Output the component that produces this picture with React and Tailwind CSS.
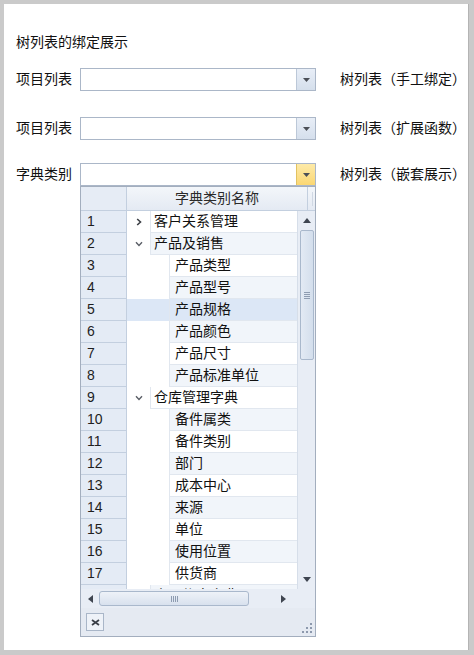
import React from "react";

const FONT = { fontFamily: '"Liberation Sans", "Noto Sans CJK SC", sans-serif' };

function DownTri({ color = "#4b4f57" }) {
  return (
    <svg width="7" height="4" viewBox="0 0 7 4">
      <path d="M0 0 H7 L3.5 4 Z" fill={color} />
    </svg>
  );
}

function ComboInput({ hover, children }) {
  return (
    <div className="relative w-[236px] h-[23px] border border-[#abb7c8] bg-white flex justify-end">
      <div
        className={
          hover
            ? "w-[19px] h-full border-l border-[#e2c261] bg-gradient-to-b from-[#fdeaa8] to-[#fbd772] flex items-center justify-center"
            : "w-[19px] h-full border-l border-[#bcc8d8] bg-gradient-to-b from-[#e8eef7] to-[#d5dfec] flex items-center justify-center"
        }
      >
        <DownTri />
      </div>
      {children}
    </div>
  );
}

const rows = [
  { n: 1, level: 1, text: "客户关系管理", exp: "right" },
  { n: 2, level: 1, text: "产品及销售", exp: "down" },
  { n: 3, level: 2, text: "产品类型" },
  { n: 4, level: 2, text: "产品型号" },
  { n: 5, level: 2, text: "产品规格", hover: true },
  { n: 6, level: 2, text: "产品颜色" },
  { n: 7, level: 2, text: "产品尺寸" },
  { n: 8, level: 2, text: "产品标准单位" },
  { n: 9, level: 1, text: "仓库管理字典", exp: "down" },
  { n: 10, level: 2, text: "备件属类" },
  { n: 11, level: 2, text: "备件类别" },
  { n: 12, level: 2, text: "部门" },
  { n: 13, level: 2, text: "成本中心" },
  { n: 14, level: 2, text: "来源" },
  { n: 15, level: 2, text: "单位" },
  { n: 16, level: 2, text: "使用位置" },
  { n: 17, level: 2, text: "供货商" },
  { n: 18, level: 1, text: "人员信息字典", exp: "right" },
];

function Chevron({ dir }) {
  if (dir === "right")
    return (
      <svg width="6" height="8" viewBox="0 0 6 8">
        <path d="M1.2 1 L4.5 4 L1.2 7" fill="none" stroke="#3c3f45" strokeWidth="1.6" />
      </svg>
    );
  return (
    <svg width="8" height="6" viewBox="0 0 8 6">
      <path d="M1 1.3 L4 4.5 L7 1.3" fill="none" stroke="#5a5e66" strokeWidth="1.4" />
    </svg>
  );
}

function Row({ r }) {
  const even = r.n % 2 === 0;
  const rowBg = r.hover ? "bg-[#dce7f6]" : "bg-white";
  const cellBg = r.hover ? "bg-[#dce7f6]" : even ? "bg-[#f1f5fa]" : "bg-white";
  return (
    <div className="flex h-[22px] shrink-0">
      <div className="w-[46px] shrink-0 bg-[#e4ebf5] border-r border-b border-[#c3cfdf] pl-[6px] flex items-center text-[14px] text-[#1e1e1e]">
        {r.n}
      </div>
      <div className={"flex-1 flex " + rowBg}>
        {r.level === 1 ? (
          <>
            <div className="w-[23px] shrink-0 flex items-center justify-center">
              <Chevron dir={r.exp} />
            </div>
            <div className={"flex-1 border-l border-b border-[#e1e7ef] pl-[3px] flex items-center text-[14px] text-[#111] " + cellBg}>
              {r.text}
            </div>
          </>
        ) : (
          <>
            <div className="w-[42px] shrink-0" />
            <div className={"flex-1 border-l border-b border-[#e1e7ef] pl-[5px] flex items-center text-[14px] text-[#111] " + cellBg}>
              {r.text}
            </div>
          </>
        )}
      </div>
    </div>
  );
}

function Popup() {
  return (
    <div className="absolute left-[-1px] top-[22px] w-[236px] h-[451px] border border-[#a3aebe] bg-white flex flex-col z-10">
      {/* header */}
      <div className="flex h-[24px] shrink-0 bg-gradient-to-b from-[#f3f6fa] to-[#e4eaf3] border-b border-[#c3cfdf]">
        <div className="w-[46px] shrink-0 border-r border-[#c3cfdf] bg-[#e6ecf5]" />
        <div className="w-[181px] shrink-0 border-r border-[#c3cfdf] flex items-center justify-center text-[14px] text-[#2a2a2a]">
          字典类别名称
        </div>
        <div className="flex-1 flex items-center justify-end pr-[2px]">
          <div className="w-px h-[14px] bg-[#d0d8e3]" />
        </div>
      </div>
      {/* body */}
      <div className="flex h-[378px] shrink-0">
        <div className="w-[216px] shrink-0 overflow-hidden flex flex-col">
          {rows.map((r) => (
            <Row key={r.n} r={r} />
          ))}
        </div>
        <div className="flex-1 bg-[#e8edf5] border-l border-[#d6dee9] flex flex-col items-center">
          <div className="h-[18px] shrink-0 flex items-center justify-center">
            <svg width="8" height="5" viewBox="0 0 8 5">
              <path d="M0 5 H8 L4 0 Z" fill="#3f4550" />
            </svg>
          </div>
          <div className="mt-[1px] w-[14px] h-[130px] rounded-[2px] border border-[#a9b8cc] bg-gradient-to-r from-[#e3eaf4] to-[#d3deec] flex flex-col items-center justify-center gap-[1px]">
            <div className="w-[6px] h-px bg-[#8e9cb1]" />
            <div className="w-[6px] h-px bg-[#8e9cb1]" />
            <div className="w-[6px] h-px bg-[#8e9cb1]" />
            <div className="w-[6px] h-px bg-[#8e9cb1]" />
          </div>
          <div className="flex-1" />
          <div className="h-[20px] shrink-0 flex items-center justify-center">
            <svg width="8" height="5" viewBox="0 0 8 5">
              <path d="M0 0 H8 L4 5 Z" fill="#3f4550" />
            </svg>
          </div>
        </div>
      </div>
      {/* horizontal scrollbar */}
      <div className="flex h-[19px] shrink-0 bg-[#e8edf5]">
        <div className="w-[216px] shrink-0 flex items-center">
          <div className="w-[18px] shrink-0 flex items-center justify-center">
            <svg width="5" height="8" viewBox="0 0 5 8">
              <path d="M5 0 V8 L0 4 Z" fill="#3f4550" />
            </svg>
          </div>
          <div className="w-[150px] h-[15px] rounded-[3px] border border-[#a9b8cc] bg-gradient-to-b from-[#eef2f8] to-[#d8e1ee] flex items-center justify-center gap-[1px]">
            <div className="w-px h-[6px] bg-[#8e9cb1]" />
            <div className="w-px h-[6px] bg-[#8e9cb1]" />
            <div className="w-px h-[6px] bg-[#8e9cb1]" />
            <div className="w-px h-[6px] bg-[#8e9cb1]" />
          </div>
          <div className="flex-1 flex items-center justify-end pr-[11px]">
            <svg width="5" height="8" viewBox="0 0 5 8">
              <path d="M0 0 V8 L5 4 Z" fill="#3f4550" />
            </svg>
          </div>
        </div>
        <div className="flex-1" />
      </div>
      {/* footer */}
      <div className="flex-1 bg-[#e5eaf2] flex items-center justify-between pl-[5px] pr-[2px] relative">
        <div className="w-[18px] h-[18px] border border-[#a9b6c8] bg-[#eef2f8] flex items-center justify-center">
          <svg width="9" height="7" viewBox="0 0 9 7">
            <path d="M1 1 L8 6 M8 1 L1 6" stroke="#3a3f48" strokeWidth="1.8" />
          </svg>
        </div>
        <svg width="12" height="12" viewBox="0 0 12 12" className="self-end mb-[2px]">
          <rect x="9" y="1" width="2" height="2" fill="#8d99ad" />
          <rect x="5" y="5" width="2" height="2" fill="#8d99ad" />
          <rect x="9" y="5" width="2" height="2" fill="#8d99ad" />
          <rect x="1" y="9" width="2" height="2" fill="#8d99ad" />
          <rect x="5" y="9" width="2" height="2" fill="#8d99ad" />
          <rect x="9" y="9" width="2" height="2" fill="#8d99ad" />
        </svg>
      </div>
    </div>
  );
}

export default function App() {
  return (
    <div className="w-[474px] h-[655px] bg-[#cacaca] pt-[4px] pl-[4px] pr-[5px] pb-[5px]" style={FONT}>
      <div className="w-full h-full bg-white border-r border-[#b4b4b4] flex flex-col pl-[12px] text-[14px] text-[#111]">
        <div className="mt-[28px] leading-[20px]">树列表的绑定展示</div>
        <div className="mt-[16px] flex items-center h-[23px]">
          <div className="w-[64px] shrink-0">项目列表</div>
          <ComboInput />
          <div className="ml-[24px]">树列表（手工绑定）</div>
        </div>
        <div className="mt-[26px] flex items-center h-[23px]">
          <div className="w-[64px] shrink-0">项目列表</div>
          <ComboInput />
          <div className="ml-[24px]">树列表（扩展函数）</div>
        </div>
        <div className="mt-[23px] flex items-center h-[23px]">
          <div className="w-[64px] shrink-0">字典类别</div>
          <ComboInput hover>
            <Popup />
          </ComboInput>
          <div className="ml-[24px]">树列表（嵌套展示）</div>
        </div>
      </div>
    </div>
  );
}
